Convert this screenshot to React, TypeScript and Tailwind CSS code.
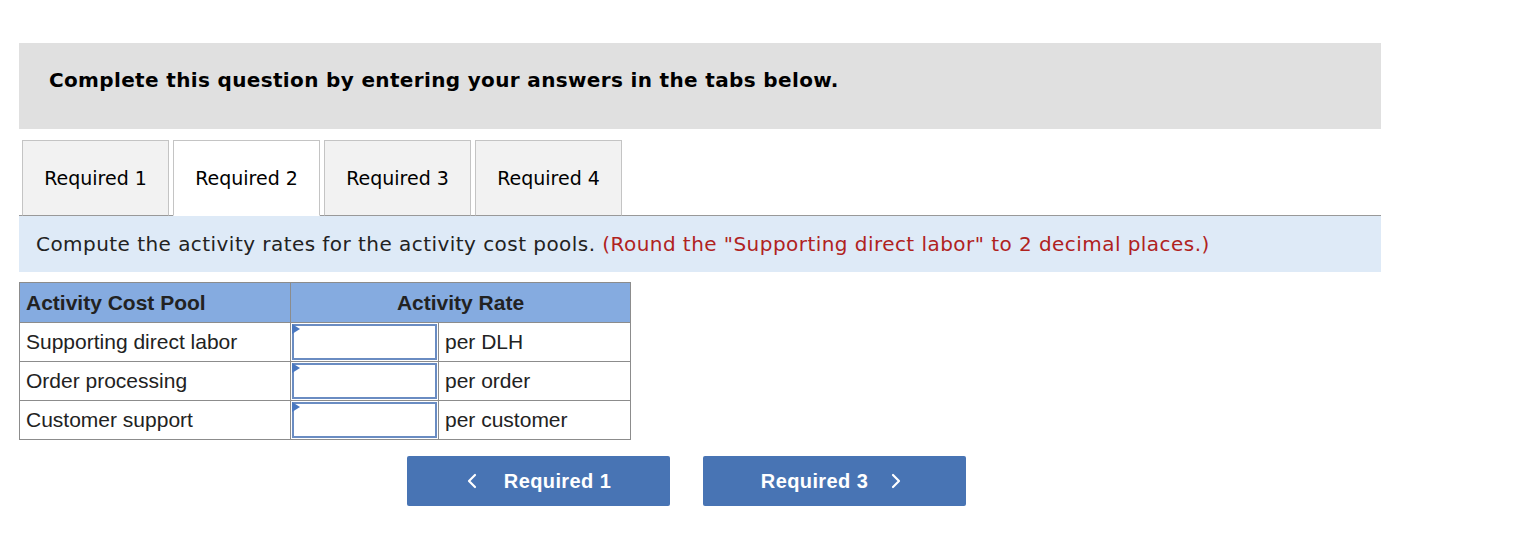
import { ChevronLeft, ChevronRight } from "lucide-react";

const verdana = "font-['DejaVu_Sans',Tahoma,Verdana,sans-serif]";
const arial = "font-['Liberation_Sans',Arial,sans-serif]";

const tabs = ["Required 1", "Required 2", "Required 3", "Required 4"];

const rows = [
  { pool: "Supporting direct labor", unit: "per DLH" },
  { pool: "Order processing", unit: "per order" },
  { pool: "Customer support", unit: "per customer" },
];

function RateInput() {
  return (
    <div className="relative h-full p-px">
      <span className="absolute left-[1px] top-[1px] h-0 w-0 border-y-[5px] border-l-[8px] border-y-transparent border-l-[#4a78c0]" />
      <input className="h-full w-full border-2 border-[#6a8cc2] bg-white outline-none" />
    </div>
  );
}

export default function App() {
  return (
    <div className="min-h-[534px] bg-white pt-[43px]">
      <div className="w-[1362px] ml-[19px]">
        <div className={`h-[86px] bg-[#e0e0e0] pl-[30px] pt-[22px] ${verdana}`}>
          <p className="text-[20px] font-bold tracking-[0.35px] text-black">
            Complete this question by entering your answers in the tabs below.
          </p>
        </div>

        <div className="mt-[11px] flex gap-[4px] border-b border-[#999] pl-[3px]">
          {tabs.map((t) => {
            const active = t === "Required 2";
            return (
              <div
                key={t}
                className={`-mb-px flex h-[76px] w-[147px] items-center justify-center border border-[#c4c4c4] pt-[1px] text-[19px] text-black ${verdana} ${
                  active ? "border-[#999] border-b-white bg-white" : "border-b-[#999] bg-[#f2f2f2]"
                }`}
              >
                {t}
              </div>
            );
          })}
        </div>

        <div className={`flex h-[56px] items-center bg-[#deeaf7] pl-[17px] text-[20px] tracking-[0.45px] text-[#222] ${verdana}`}>
          Compute the activity rates for the activity cost pools.&nbsp;
          <span className="text-[#b0221e]">(Round the "Supporting direct labor" to 2 decimal places.)</span>
        </div>

        <table className={`mt-[10px] w-[612px] border-collapse text-[21px] text-[#222] ${arial}`}>
          <thead>
            <tr className="h-[40px] bg-[#85abe0]">
              <th className="w-[271px] border border-[#8c8c8c] px-[6px] text-left font-bold">Activity Cost Pool</th>
              <th colSpan={2} className="border border-[#8c8c8c] font-bold">Activity Rate</th>
            </tr>
          </thead>
          <tbody>
            {rows.map((r) => (
              <tr key={r.pool} className="h-[39px]">
                <td className="border border-[#8c8c8c] px-[6px]">{r.pool}</td>
                <td className="h-[39px] w-[148px] border border-[#8c8c8c] p-0">
                  <RateInput />
                </td>
                <td className="border border-[#8c8c8c] px-[6px]">{r.unit}</td>
              </tr>
            ))}
          </tbody>
        </table>

        <div className={`mt-[16px] ml-[388px] flex gap-[33px] ${arial}`}>
          <button className="flex h-[50px] w-[263px] items-center justify-center gap-[20px] rounded-[2px] bg-[#4874b4] pr-[6px] text-[20px] font-bold tracking-[0.4px] text-white">
            <ChevronLeft size={24} strokeWidth={2.2} />
            Required 1
          </button>
          <button className="flex h-[50px] w-[263px] items-center justify-center gap-[16px] rounded-[2px] bg-[#4874b4] text-[20px] font-bold tracking-[0.4px] text-white">
            Required 3
            <ChevronRight size={24} strokeWidth={2.2} />
          </button>
        </div>
      </div>
    </div>
  );
}
